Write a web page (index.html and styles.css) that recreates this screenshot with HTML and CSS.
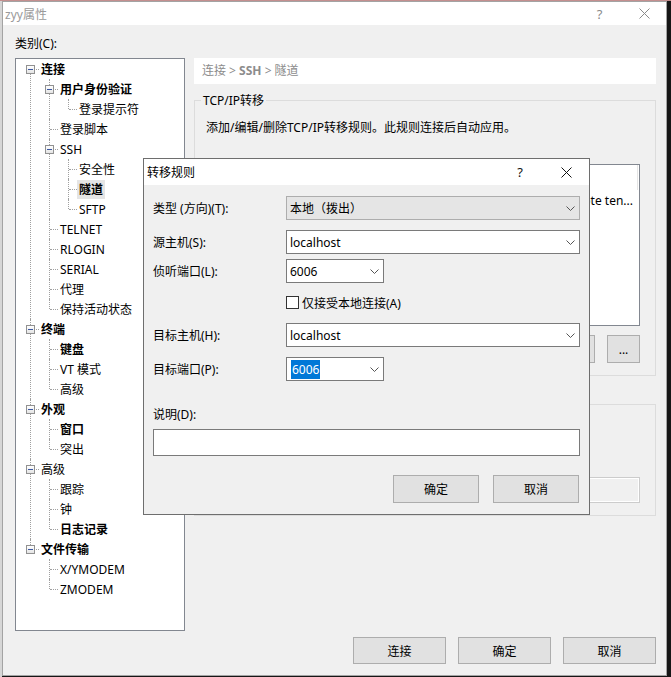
FILE: index.html
```html
<!DOCTYPE html>
<html lang="zh-CN">
<head>
    <meta charset="UTF-8">
    <title>zyy属性</title>
    <link rel="stylesheet" href="styles.css">
</head>
<body>

<div class="window">
    <div class="titlebar">
        <span class="title">zyy属性</span>
        <span class="tb-btn">?</span>
        <span class="tb-btn close">
            <svg width="11" height="11" viewBox="0 0 11 11"><path d="M0.5 0.5L10.5 10.5M10.5 0.5L0.5 10.5" stroke="#8a8a8a" fill="none"/></svg>
        </span>
    </div>

    <div class="content">
        <div class="cat-label">类别(C):</div>

        <!-- 类别树 -->
        <div class="tree-box">
            <ul class="tree">
                <li><div class="node"><i class="box"></i><span class="b">连接</span></div>
                    <ul>
                        <li><div class="node"><i class="box"></i><span class="b">用户身份验证</span></div>
                            <ul>
                                <li><div class="node"><span>登录提示符</span></div></li>
                            </ul>
                        </li>
                        <li><div class="node"><span>登录脚本</span></div></li>
                        <li><div class="node"><i class="box"></i><span>SSH</span></div>
                            <ul>
                                <li><div class="node"><span>安全性</span></div></li>
                                <li><div class="node"><span class="b sel">隧道</span></div></li>
                                <li><div class="node"><span>SFTP</span></div></li>
                            </ul>
                        </li>
                        <li><div class="node"><span>TELNET</span></div></li>
                        <li><div class="node"><span>RLOGIN</span></div></li>
                        <li><div class="node"><span>SERIAL</span></div></li>
                        <li><div class="node"><span>代理</span></div></li>
                        <li><div class="node"><span>保持活动状态</span></div></li>
                    </ul>
                </li>
                <li><div class="node"><i class="box"></i><span class="b">终端</span></div>
                    <ul>
                        <li><div class="node"><span class="b">键盘</span></div></li>
                        <li><div class="node"><span>VT 模式</span></div></li>
                        <li><div class="node"><span>高级</span></div></li>
                    </ul>
                </li>
                <li><div class="node"><i class="box"></i><span class="b">外观</span></div>
                    <ul>
                        <li><div class="node"><span class="b">窗口</span></div></li>
                        <li><div class="node"><span>突出</span></div></li>
                    </ul>
                </li>
                <li><div class="node"><i class="box"></i><span>高级</span></div>
                    <ul>
                        <li><div class="node"><span>跟踪</span></div></li>
                        <li><div class="node"><span>钟</span></div></li>
                        <li><div class="node"><span class="b">日志记录</span></div></li>
                    </ul>
                </li>
                <li><div class="node"><i class="box"></i><span class="b">文件传输</span></div>
                    <ul>
                        <li><div class="node"><span>X/YMODEM</span></div></li>
                        <li><div class="node"><span>ZMODEM</span></div></li>
                    </ul>
                </li>
            </ul>
        </div>

        <!-- 右侧面板 -->
        <div class="panel">
            <div class="crumb">连接 &gt; <b>SSH</b> &gt; 隧道</div>

            <div class="group">
                <span class="group-title">TCP/IP转移</span>
                <p class="desc">添加/编辑/删除TCP/IP转移规则。此规则连接后自动应用。</p>
                <div class="listview">
                    <div class="lv-head"><span class="sep"></span></div>
                    <div class="lv-row">
                        <span>本地</span><span>6006</span><span>localhost:6006</span><span>Remote ten...</span>
                    </div>
                </div>
                <div class="list-btns">
                    <button class="btn">添加(A)...</button>
                    <button class="btn">编辑(E)...</button>
                    <button class="btn">删除(R)</button>
                    <button class="btn more">...</button>
                </div>
            </div>

            <div class="group x11">
                <span class="group-title">X11转移</span>
                <div class="x11-row">
                    <span>X DISPLAY(D):</span>
                    <div class="disabled-field"></div>
                </div>
            </div>
        </div>
    </div>

    <div class="footer">
        <button class="btn">连接</button>
        <button class="btn">确定</button>
        <button class="btn">取消</button>
    </div>

    <!-- 转移规则 对话框 -->
    <div class="dialog">
        <div class="dlg-title">
            <span class="title">转移规则</span>
            <span class="tb-btn">?</span>
            <span class="tb-btn">
                <svg width="11" height="11" viewBox="0 0 11 11"><path d="M0.5 0.5L10.5 10.5M10.5 0.5L0.5 10.5" stroke="#111" fill="none"/></svg>
            </span>
        </div>

        <div class="dlg-body">
            <div class="row">
                <label>类型 (方向)(T):</label>
                <div class="combo dropdown">
                    <span>本地（拨出）</span>
                    <svg width="9" height="5" viewBox="0 0 9 5"><path d="M0.5 0.5L4.5 4.5L8.5 0.5" stroke="#555" fill="none"/></svg>
                </div>
            </div>
            <div class="row mt10">
                <label>源主机(S):</label>
                <div class="combo">
                    <span>localhost</span>
                    <svg width="9" height="5" viewBox="0 0 9 5"><path d="M0.5 0.5L4.5 4.5L8.5 0.5" stroke="#555" fill="none"/></svg>
                </div>
            </div>
            <div class="row mt5">
                <label>侦听端口(L):</label>
                <div class="combo short">
                    <span>6006</span>
                    <svg width="9" height="5" viewBox="0 0 9 5"><path d="M0.5 0.5L4.5 4.5L8.5 0.5" stroke="#555" fill="none"/></svg>
                </div>
            </div>
            <div class="row check-row">
                <label></label>
                <span class="check"></span>
                <span class="check-label">仅接受本地连接(A)</span>
            </div>
            <div class="row mt14">
                <label>目标主机(H):</label>
                <div class="combo">
                    <span>localhost</span>
                    <svg width="9" height="5" viewBox="0 0 9 5"><path d="M0.5 0.5L4.5 4.5L8.5 0.5" stroke="#555" fill="none"/></svg>
                </div>
            </div>
            <div class="row mt10">
                <label>目标端口(P):</label>
                <div class="combo short">
                    <span class="selected">6006</span>
                    <svg width="9" height="5" viewBox="0 0 9 5"><path d="M0.5 0.5L4.5 4.5L8.5 0.5" stroke="#555" fill="none"/></svg>
                </div>
            </div>

            <div class="desc-label">说明(D):</div>
            <div class="text-input"></div>

            <div class="dlg-btns">
                <button class="btn">确定</button>
                <button class="btn">取消</button>
            </div>
        </div>
    </div>
</div>

</body>
</html>
```

FILE: styles.css
```css
body {
    margin: 0;
    height: 677px;
    overflow: hidden;
    background:
        linear-gradient(#c48f8f 0 1px, transparent 1px),
        linear-gradient(to right, #d6d6d6 0 2px, #161616 2px);
    font-family: "Noto Sans", "Noto Sans CJK SC", sans-serif;
    font-size: 12px;
    color: #000;
}

.window {
    position: relative;
    margin: 1px 0 0 2px;
    width: 665px;
    height: 675px;
    box-sizing: border-box;
    border: 1px solid #a3a3a3;
    background: #f0f0f0;
}

.titlebar {
    height: 23px;
    background: #fff;
    display: flex;
    align-items: center;
}

.titlebar .title {
    flex: 1;
    padding-left: 2px;
    color: #9a9a9a;
}

.tb-btn {
    width: 45px;
    height: 100%;
    display: flex;
    align-items: center;
    justify-content: center;
    font-size: 13px;
    color: #8a8a8a;
}

.tb-btn.close {
    width: 44px;
}

.content {
    display: grid;
    grid-template-columns: 170px 462px;
    grid-template-rows: 20px 573px;
    column-gap: 9px;
    row-gap: 4px;
    padding: 9px 10px 0 12px;
}

.cat-label {
    grid-column: 1;
    grid-row: 1;
    line-height: 20px;
}

/* 类别树 */
.tree-box {
    grid-column: 1;
    grid-row: 2;
    background: #fff;
    border: 1px solid #828790;
    box-sizing: border-box;
    overflow: hidden;
}

.tree,
.tree ul {
    list-style: none;
    margin: 0;
    padding: 0;
}

.tree ul {
    margin-left: 19px;
}

.tree li {
    position: relative;
}

.tree li::before {
    content: "";
    position: absolute;
    left: 14px;
    top: 0;
    bottom: 0;
    border-left: 1px dotted #a0a0a0;
}

.tree li:last-child::before {
    bottom: auto;
    height: 10px;
}

.tree > li:first-child::before {
    top: 10px;
    bottom: 0;
    height: auto;
}

.tree li::after {
    content: "";
    position: absolute;
    left: 15px;
    top: 10px;
    width: 8px;
    border-top: 1px dotted #a0a0a0;
}

.node {
    position: relative;
    z-index: 1;
    display: flex;
    align-items: center;
    height: 20px;
    padding-left: 25px;
    white-space: nowrap;
}

.box {
    position: relative;
    width: 7px;
    height: 7px;
    margin-left: -15px;
    margin-right: 6px;
    border: 1px solid #919191;
    background: linear-gradient(#fff, #e4e4e4);
}

.box::after {
    content: "";
    position: absolute;
    left: 1px;
    top: 3px;
    width: 5px;
    height: 1px;
    background: #3b57a2;
}

.b {
    font-weight: bold;
}

.sel {
    background: #e5e5e5;
    line-height: 19px;
    padding: 0 2px;
    margin-left: -2px;
}

/* 右侧面板 */
.panel {
    grid-column: 2;
    grid-row: 2;
}

.crumb {
    height: 26px;
    line-height: 26px;
    padding-left: 8px;
    background: #fff;
    color: #8c8c8c;
}

.group {
    margin-top: 16px;
    border: 1px solid #dcdcdc;
}

.group.x11 {
    margin-top: 28px;
}

.group-title {
    display: block;
    width: fit-content;
    margin: -9px 0 0 6px;
    padding: 0 2px;
    line-height: 17px;
    background: #f0f0f0;
}

.desc {
    margin: 9px 0 0 11px;
    line-height: 20px;
}

.listview {
    margin: 26px 15px 0 8px;
    height: 162px;
    box-sizing: border-box;
    border: 1px solid #828790;
    background: #fff;
    overflow: hidden;
}

.lv-head {
    height: 25px;
    display: flex;
    justify-content: flex-end;
}

.lv-head .sep {
    width: 1px;
    height: 25px;
    margin-right: 1px;
    background: #e5e5e5;
}

.lv-row {
    display: flex;
    justify-content: flex-end;
    gap: 16px;
    line-height: 22px;
    padding-right: 6px;
    white-space: nowrap;
}

.btn {
    font: inherit;
    color: #000;
    background: #e1e1e1;
    border: 1px solid #adadad;
    padding: 0;
    box-sizing: border-box;
}

.list-btns {
    display: flex;
    justify-content: flex-end;
    gap: 12px;
    margin: 9px 15px 12px 0;
}

.list-btns .btn {
    width: 85px;
    height: 28px;
}

.list-btns .more {
    width: 33px;
}

.x11-row {
    display: flex;
    justify-content: flex-end;
    align-items: center;
    gap: 10px;
    margin: 64px 15px 12px 0;
}

.disabled-field {
    width: 220px;
    height: 26px;
    box-sizing: border-box;
    border: 1px solid #cccccc;
    box-shadow: inset 0 0 0 1px #fff;
}

.footer {
    display: flex;
    justify-content: flex-end;
    gap: 12px;
    padding: 6px 10px 0 0;
}

.footer .btn {
    width: 93px;
    height: 27px;
}

/* 转移规则 对话框 */
.dialog {
    position: absolute;
    left: 140px;
    top: 156px;
    width: 447px;
    height: 357px;
    box-sizing: border-box;
    border: 1px solid #6e6e6e;
    background: #f0f0f0;
}

.dlg-title {
    height: 26px;
    background: #fff;
    display: flex;
    align-items: center;
}

.dlg-title .title {
    flex: 1;
    padding-left: 3px;
}

.dlg-title .tb-btn {
    width: 46px;
    color: #111;
}

.dlg-body {
    padding: 11px 9px 11px 9px;
}

.row {
    display: flex;
    align-items: center;
    height: 24px;
}

.row label {
    width: 133px;
    flex: none;
}

.mt5 { margin-top: 5px; }
.mt10 { margin-top: 10px; }
.mt14 { margin-top: 14px; }

.check-row {
    height: 13px;
    margin-top: 13px;
}

.check {
    width: 13px;
    height: 13px;
    box-sizing: border-box;
    border: 1px solid #333;
    background: #fff;
}

.check-label {
    margin-left: 3px;
}

.combo {
    width: 294px;
    height: 24px;
    box-sizing: border-box;
    border: 1px solid #7a7a7a;
    background: #fff;
    display: flex;
    align-items: center;
    justify-content: space-between;
    padding: 0 4px 0 3px;
}

.combo.dropdown {
    background: #e5e5e5;
    border-color: #adadad;
}

.combo.short {
    width: 98px;
}

.selected {
    background: #0078d7;
    color: #fff;
    line-height: 19px;
    padding: 0 1px;
    margin-left: 1px;
}

.desc-label {
    margin-top: 24px;
    line-height: 20px;
}

.text-input {
    margin-top: 4px;
    height: 27px;
    box-sizing: border-box;
    border: 1px solid #7a7a7a;
    background: #fff;
}

.dlg-btns {
    display: flex;
    justify-content: flex-end;
    gap: 14px;
    margin-top: 19px;
    padding-right: 1px;
}

.dlg-btns .btn {
    width: 86px;
    height: 28px;
}
```
